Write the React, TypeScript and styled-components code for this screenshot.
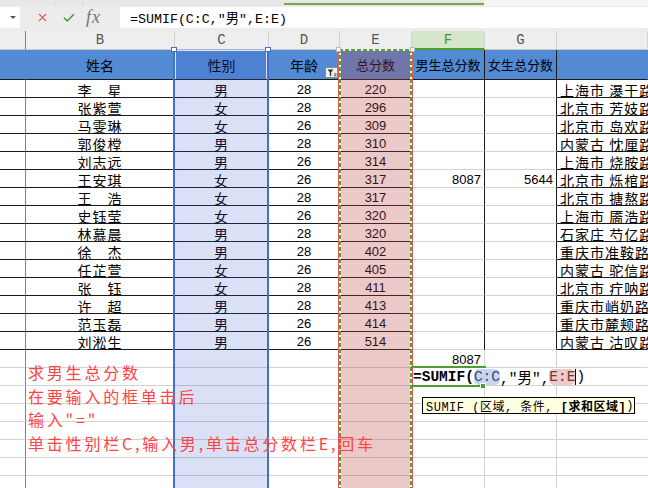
import React from "react";
import styled, { createGlobalStyle } from "styled-components";
import { X, Check } from "lucide-react";

const CJK = `"Noto Sans CJK SC", "Liberation Sans", sans-serif`;
const NUM = `"Liberation Sans", "Noto Sans CJK SC", sans-serif`;
const MONO = `"Liberation Mono", "Noto Sans CJK SC", monospace`;

const black = "#1a1a1a";
const grid = "#d2d2d2";
const green = "#5ba33b";
const headerBlue = "#528bd4";

const COLS = [26, 149, 94, 71, 72, 73, 72, 91];
const LETTERS = ["", "B", "C", "D", "E", "F", "G", ""];
const TITLES = ["", "姓名", "性别", "年龄", "总分数", "男生总分数", "女生总分数", ""];

const people = [
  { name: "李\u3000星", sex: "男", age: 28, score: 220, addr: "上海市 瀑干路" },
  { name: "张紫萱", sex: "女", age: 28, score: 296, addr: "北京市 芳妓路" },
  { name: "马雯琳", sex: "女", age: 26, score: 309, addr: "北京市 岛欢路" },
  { name: "郭俊樘", sex: "男", age: 28, score: 310, addr: "内蒙古 忱厘路" },
  { name: "刘志远", sex: "男", age: 26, score: 314, addr: "上海市 烧胺路" },
  { name: "王安琪", sex: "女", age: 26, score: 317, addr: "北京市 烁棺路" },
  { name: "王\u3000浩", sex: "女", age: 28, score: 317, addr: "北京市 搪熬路" },
  { name: "史钰莹", sex: "女", age: 26, score: 320, addr: "上海市 靥浩路" },
  { name: "林慕晨", sex: "男", age: 28, score: 320, addr: "石家庄 芍亿路" },
  { name: "徐\u3000杰", sex: "男", age: 28, score: 402, addr: "重庆市准鞍路" },
  { name: "任芷萱", sex: "女", age: 26, score: 405, addr: "内蒙古 驼信路" },
  { name: "张\u3000钰", sex: "女", age: 28, score: 411, addr: "北京市 疔呐路" },
  { name: "许\u3000超", sex: "男", age: 28, score: 413, addr: "重庆市峭奶路" },
  { name: "范玉磊", sex: "男", age: 26, score: 414, addr: "重庆市麓颊路" },
  { name: "刘淞生", sex: "男", age: 26, score: 514, addr: "内蒙古 沽叹路" },
];

const GlobalStyle = createGlobalStyle`
  * { box-sizing: border-box; }
  html, body { margin: 0; padding: 0; background: #fff; }
  body { font-family: ${CJK}; }
`;

const Page = styled.div`
  width: 648px;
  height: 488px;
  overflow: hidden;
  display: flex;
  flex-direction: column;
  background: #fff;
`;

const TopStrip = styled.div`
  height: 6px;
  flex: none;
  display: flex;
  background: #e8e8e8;
`;

const StripPart = styled.div<{ $w?: number; $light?: boolean }>`
  width: ${(p) => (p.$w ? `${p.$w}px` : "auto")};
  flex: ${(p) => (p.$w ? "none" : "1")};
  background: ${(p) => (p.$light ? "#f6f6f6" : "transparent")};
  border-right: ${(p) => (p.$w && p.$w < 60 ? "1px solid #d6d6d6" : "none")};
`;

const ActiveTab = styled.div`
  width: 200px;
  flex: none;
  background: linear-gradient(#e8e8e8 0 3px, #70ad47 3px 5px, #e8e8e8 5px);
`;

const FormulaBar = styled.div`
  height: 25px;
  flex: none;
  display: flex;
  padding: 1px 0 3px;
  background: #ececec;
`;

const NameBox = styled.div`
  width: 20px;
  background: #fff;
  display: flex;
  align-items: center;
  justify-content: flex-end;
  padding-right: 4px;
`;

const DropCaret = styled.span`
  width: 0;
  height: 0;
  border-left: 3px solid transparent;
  border-right: 3px solid transparent;
  border-top: 3px solid #555;
`;

const BarButtons = styled.div`
  width: 100px;
  display: flex;
  align-items: center;
  padding-left: 16px;
  gap: 13px;
`;

const Fx = styled.span`
  font-family: "Liberation Serif", serif;
  font-style: italic;
  font-size: 18px;
  color: #777;
  margin-left: -3px;
  letter-spacing: 1px;
`;

const FormulaInput = styled.div`
  flex: 1;
  background: #fff;
  display: flex;
  align-items: center;
  padding-left: 10px;
  font-family: ${MONO};
  font-size: 13.3px;
  color: #000;
  white-space: pre;
`;

const Sheet = styled.div`
  position: relative;
  flex: none;
  height: 457px;
  display: grid;
  grid-template-columns: ${COLS.map((w) => `${w}px`).join(" ")};
  grid-template-rows: 19px 30px repeat(15, 18px) repeat(8, 18px);
  overflow: hidden;
`;

const ColLetter = styled.div<{ $active?: boolean; $first?: boolean }>`
  display: flex;
  align-items: center;
  justify-content: center;
  background: ${(p) => (p.$active ? "#d5e6cb" : "#eeeeee")};
  color: ${(p) => (p.$active ? "#3d9a1f" : "#555")};
  border-right: 1px solid ${(p) => (p.$first ? green : "#d3d3d3")};
  border-bottom: ${(p) => (p.$active ? "2px solid #4f9d2f" : "1px solid #c9c9c9")};
  font-family: "Liberation Mono", monospace;
  font-size: 14px;
`;

const TitleCell = styled.div<{ $v: string; $small?: boolean; $picked?: boolean }>`
  position: relative;
  display: flex;
  align-items: center;
  justify-content: center;
  background: ${headerBlue};
  border-right: 1px solid ${(p) => p.$v};
  border-bottom: 1px solid ${black};
  font-family: ${CJK};
  font-size: ${(p) => (p.$small ? 13 : 14)}px;
  color: #000;
  white-space: nowrap;
  box-shadow: ${(p) => (p.$picked ? "inset 1px 1px 0 #fff, inset -2px 0 0 #fff" : "none")};
`;

const FilterButton = styled.span`
  position: absolute;
  right: 1px;
  bottom: 1px;
  width: 13px;
  height: 11px;
  background: #f2f2f2;
  border: 1px solid #8c8c8c;
  display: flex;
  align-items: center;
  justify-content: center;
`;

const DataCell = styled.div<{ $h: string; $v: string; $justify: string; $cjk?: boolean }>`
  display: flex;
  align-items: flex-end;
  justify-content: ${(p) => p.$justify};
  padding: 0 3px;
  min-width: 0;
  border-right: 1px solid ${(p) => p.$v};
  border-bottom: 1px solid ${(p) => p.$h};
  white-space: pre;
  color: #000;
  font-family: ${(p) => (p.$cjk ? CJK : NUM)};
  font-size: ${(p) => (p.$cjk ? 14 : 13)}px;
  letter-spacing: ${(p) => (p.$cjk ? 1 : 0)}px;
  line-height: 14px;
`;

const ColumnPick = styled.div`
  position: absolute;
  left: 173px;
  top: 18px;
  bottom: 0;
  width: 96px;
  border-left: 2px solid #4670c8;
  border-right: 2px solid #4670c8;
  background: rgba(60, 90, 200, 0.19);
  z-index: 2;
`;

const PickHandle = styled.span<{ $side: "left" | "right" }>`
  position: absolute;
  top: -2px;
  ${(p) => p.$side}: -4px;
  width: 6px;
  height: 5px;
  background: #fff;
  border: 1px solid #4670c8;
`;

const CopyRange = styled.div`
  position: absolute;
  left: 338px;
  top: 18px;
  bottom: 0;
  width: 75px;
  border-left: 1px solid #e05a5a;
  border-right: 1px solid #e05a5a;
  background: rgba(190, 70, 70, 0.29);
  z-index: 2;
`;

const Ants = styled.span<{ $edge: "left" | "right" | "top" }>`
  position: absolute;
  ${(p) =>
    p.$edge === "top"
      ? `top: 0; left: 0; right: 0; height: 2px;
         background: repeating-linear-gradient(to right, #5aa02c 0 4px, #fff 4px 6px);`
      : `top: 0; bottom: 0; ${p.$edge}: 0; width: 2px;
         background: repeating-linear-gradient(to bottom, #5aa02c 0 4px, #fff 4px 6px);`}
`;

const CornerMark = styled.span<{ $side: "left" | "right" }>`
  position: absolute;
  top: -2px;
  ${(p) => p.$side}: -3px;
  width: 5px;
  height: 5px;
  background: #fff;
  border: 1px solid #bbb;
`;

const Note = styled.div`
  position: absolute;
  left: 28px;
  top: 330px;
  z-index: 4;
  color: #ff4343;
  font-family: ${CJK};
  font-size: 16px;
  letter-spacing: 2.8px;
  line-height: 23.6px;
  white-space: nowrap;
`;

const ActiveCell = styled.div`
  position: absolute;
  left: 411px;
  top: 335px;
  width: 75px;
  height: 21px;
  border-top: 2px solid #4f9d2f;
  border-bottom: 2px solid #4f9d2f;
  z-index: 5;
`;

const FillHandle = styled.span`
  position: absolute;
  left: 480px;
  top: 352px;
  width: 6px;
  height: 6px;
  background: #4f9d2f;
  border: 1px solid #fff;
  z-index: 7;
`;

const Editor = styled.div`
  position: absolute;
  left: 413px;
  top: 337px;
  height: 17px;
  padding-right: 3px;
  background: #fff;
  z-index: 6;
  display: flex;
  align-items: center;
  font-family: ${MONO};
  font-size: 14.5px;
  color: #000;
  white-space: pre;
`;

const FnName = styled.b`
  font-weight: 700;
`;

const RefChip = styled.span<{ $tone: "blue" | "red" }>`
  background: ${(p) => (p.$tone === "blue" ? "#c8d5f1" : "#f0c9c9")};
  color: ${(p) => (p.$tone === "blue" ? "#3b4a6b" : "#6b3b3b")};
  border-radius: 5px;
  line-height: 16px;
`;

const TextCaret = styled.span`
  width: 1px;
  height: 16px;
  background: #000;
`;

const Tooltip = styled.div`
  position: absolute;
  left: 422px;
  top: 366px;
  width: 213px;
  height: 17px;
  padding: 0 3px;
  background: #ffffe1;
  border: 1px solid #000;
  z-index: 6;
  display: flex;
  align-items: center;
  font-family: ${MONO};
  font-size: 12px;
  letter-spacing: 0.5px;
  color: #000;
  white-space: pre;
`;

function borders(col: number, filled: boolean) {
  const v = col === 0 ? green : col === 7 ? "transparent" : filled ? black : grid;
  const h = filled && col !== 5 && col !== 6 ? black : grid;
  return { $h: h, $v: v };
}

function TableRow({ p, index }: { p: (typeof people)[number]; index: number }) {
  const sums = index === 5;
  return (
    <>
      <DataCell {...borders(0, true)} $justify="center" />
      <DataCell {...borders(1, true)} $justify="center" $cjk>{p.name}</DataCell>
      <DataCell {...borders(2, true)} $justify="center" $cjk>{p.sex}</DataCell>
      <DataCell {...borders(3, true)} $justify="center">{p.age}</DataCell>
      <DataCell {...borders(4, true)} $justify="center">{p.score}</DataCell>
      <DataCell {...borders(5, true)} $justify="flex-end">{sums ? "8087" : ""}</DataCell>
      <DataCell {...borders(6, true)} $justify="flex-end">{sums ? "5644" : ""}</DataCell>
      <DataCell {...borders(7, true)} $justify="flex-start" $cjk>{p.addr}</DataCell>
    </>
  );
}

function EmptyRow({ index }: { index: number }) {
  return (
    <>
      {COLS.map((_, c) => (
        <DataCell key={c} {...borders(c, false)} $justify={c === 5 ? "flex-end" : "center"}>
          {index === 0 && c === 5 ? "8087" : ""}
        </DataCell>
      ))}
    </>
  );
}

export default function App() {
  return (
    <Page>
      <GlobalStyle />
      <TopStrip>
        <StripPart $w={55} />
        <StripPart $w={28} />
        <StripPart $w={201} />
        <ActiveTab />
        <StripPart $light />
      </TopStrip>

      <FormulaBar>
        <NameBox>
          <DropCaret />
        </NameBox>
        <BarButtons>
          <X size={13} color="#df5b5b" strokeWidth={2} />
          <Check size={14} color="#3d9a3d" strokeWidth={2.6} />
          <Fx>fx</Fx>
        </BarButtons>
        <FormulaInput>=SUMIF(C:C,"男",E:E)</FormulaInput>
      </FormulaBar>

      <Sheet>
        {LETTERS.map((l, i) => (
          <ColLetter key={`l${i}`} $active={l === "F"} $first={i === 0}>
            {l}
          </ColLetter>
        ))}

        {TITLES.map((t, i) => (
          <TitleCell
            key={`t${i}`}
            $v={i === 0 ? green : i === 7 ? "transparent" : black}
            $small={i >= 4}
            $picked={i === 2}
          >
            {t}
            {i === 3 && (
              <FilterButton>
                <svg width="10" height="8" viewBox="0 0 10 8">
                  <path d="M0.5 0.5 H6.5 L4.2 3.2 V7.5 L2.8 6.6 V3.2 Z" fill="#333" />
                  <rect x="7" y="4.5" width="2.5" height="0.9" fill="#333" />
                  <rect x="7" y="6.3" width="2.5" height="0.9" fill="#333" />
                </svg>
              </FilterButton>
            )}
          </TitleCell>
        ))}

        {people.map((p, r) => (
          <TableRow key={`r${r}`} p={p} index={r} />
        ))}

        {Array.from({ length: 8 }).map((_, r) => (
          <EmptyRow key={`e${r}`} index={r} />
        ))}

        <ColumnPick>
          <PickHandle $side="left" />
          <PickHandle $side="right" />
        </ColumnPick>

        <CopyRange>
          <Ants $edge="top" />
          <Ants $edge="left" />
          <Ants $edge="right" />
          <CornerMark $side="left" />
          <CornerMark $side="right" />
        </CopyRange>

        <Note>
          <div>求男生总分数</div>
          <div>在要输入的框单击后</div>
          <div>输入"="</div>
          <div>单击性别栏C,输入男,单击总分数栏E,回车</div>
        </Note>

        <ActiveCell />
        <Editor>
          <FnName>=SUMIF(</FnName>
          <RefChip $tone="blue">C:C</RefChip>
          ,"男",
          <RefChip $tone="red">E:E</RefChip>
          <TextCaret />)
        </Editor>
        <FillHandle />

        <Tooltip>
          SUMIF (区域, 条件, <b>[求和区域]</b>)
        </Tooltip>
      </Sheet>
    </Page>
  );
}
